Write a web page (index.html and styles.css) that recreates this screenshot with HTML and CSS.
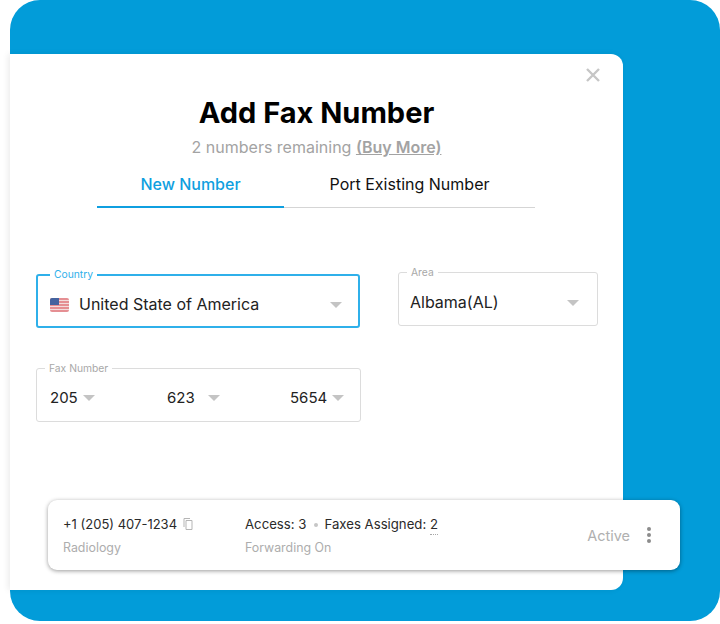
FILE: index.html
```html
<!DOCTYPE html>
<html lang="en">
<head>
    <meta charset="UTF-8">
    <meta name="viewport" content="width=device-width, initial-scale=1.0">
    <title>Add Fax Number</title>
    <link rel="stylesheet" href="styles.css">
</head>
<body>
    <div class="panel">
        <div class="modal">
            <svg class="close" width="16" height="16" viewBox="0 0 16 16"><path d="M2 2l12 12M14 2L2 14"/></svg>
            <h1>Add Fax Number</h1>
            <p class="remaining">2 numbers remaining <a href="#">(Buy More)</a></p>
            <div class="tabs">
                <div class="tab active">New Number</div>
                <div class="tab">Port Existing Number</div>
            </div>
            <div class="row">
                <div class="field field-country focused">
                    <span class="field-label">Country</span>
                    <svg class="flag" width="19" height="14" viewBox="0 0 19 14">
                        <rect width="19" height="14" rx="2" fill="#e58f93"/>
                        <path d="M0 2.5h19M0 5.5h19M0 8.5h19M0 11.5h19" stroke="#f3dcdc" stroke-width="1.1"/>
                        <path d="M0 2a2 2 0 0 1 2-2h7v7H0z" fill="#44639f"/>
                    </svg>
                    <span class="value">United State of America</span>
                    <span class="caret caret-end"></span>
                </div>
                <div class="field field-area">
                    <span class="field-label">Area</span>
                    <span class="value">Albama(AL)</span>
                    <span class="caret caret-end"></span>
                </div>
            </div>
            <div class="field field-fax">
                <span class="field-label">Fax Number</span>
                <div class="part part-a"><span class="value">205</span><span class="caret"></span></div>
                <div class="part part-b"><span class="value">623</span><span class="caret"></span></div>
                <div class="part part-c"><span class="value">5654</span><span class="caret"></span></div>
            </div>
        </div>
        <div class="number-card">
            <div class="col-number">
                <div class="line line-number">+1 (205) 407-1234<svg class="copy" width="10" height="12" viewBox="0 0 10 12"><path d="M3 2.5h6v9H3zM1 9V.5h6"/></svg></div>
                <div class="sub">Radiology</div>
            </div>
            <div class="col-access">
                <div class="line">Access: 3<span class="dot"></span>Faxes Assigned: <span class="dotted">2</span></div>
                <div class="sub">Forwarding On</div>
            </div>
            <div class="status">Active</div>
            <div class="more"><span></span><span></span><span></span></div>
        </div>
    </div>
</body>
</html>
```

FILE: styles.css
```css
body {
    margin: 0;
    background-color: #fff;
    font-family: Inter, "Open Sans", sans-serif;
}
.panel {
    position: relative;
    box-sizing: border-box;
    width: 710px;
    height: 621px;
    margin-left: 10px;
    padding-top: 54px;
    background-color: #029cd9;
    border-radius: 30px;
}
.modal {
    position: relative;
    box-sizing: border-box;
    width: 613px;
    height: 536px;
    padding-top: 41px;
    background-color: #fff;
    border-radius: 0 12px 12px 0;
    box-shadow: -2px 0 6px rgba(0, 0, 0, 0.08);
}
.close {
    position: absolute;
    top: 13px;
    right: 22px;
}
.close path {
    fill: none;
    stroke: #c6c6c6;
    stroke-width: 2.4;
}
h1 {
    margin: 0;
    text-align: center;
    font-size: 29px;
    line-height: 36px;
    font-weight: 700;
    color: #000;
}
.remaining {
    margin: 6px 0 0;
    text-align: center;
    font-size: 16px;
    line-height: 20px;
    color: #a3a3a3;
}
.remaining a {
    color: #a3a3a3;
    font-weight: 600;
}
.tabs {
    display: flex;
    width: 438px;
    margin: 14px 0 0 87px;
    border-bottom: 1px solid #d5d5d5;
}
.tab {
    width: 251px;
    height: 35px;
    line-height: 26px;
    font-size: 16px;
    font-weight: 400;
    color: #111;
    text-align: center;
}
.tab.active {
    width: 187px;
    margin-bottom: -1px;
    font-weight: 500;
    color: #0f9fe0;
    border-bottom: 2px solid #0f9fe0;
}
.row {
    display: flex;
    align-items: flex-start;
    margin: 64px 0 0 26px;
    gap: 38px;
}
.field {
    position: relative;
    box-sizing: border-box;
    display: flex;
    align-items: center;
    height: 54px;
    padding-top: 5px;
    border: 1px solid #dcdcdc;
    border-radius: 3px;
}
.field.focused {
    border: 2px solid #2fb0ea;
}
.field-country {
    width: 324px;
    margin-top: 2px;
    padding-left: 12px;
}
.field-area {
    width: 200px;
    padding-left: 11px;
}
.field-fax {
    width: 325px;
    margin: 40px 0 0 26px;
}
.field-label {
    position: absolute;
    top: -7px;
    left: 8px;
    padding: 0 4px;
    background-color: #fff;
    font-size: 10.3px;
    line-height: 12px;
    color: #a8a8a8;
}
.focused .field-label {
    top: -8px;
    left: 12px;
    color: #2fb0ea;
}
.flag {
    margin: 2px 10px 0 0;
}
.value {
    font-size: 16px;
    color: #222;
}
.part .value {
    font-size: 15px;
}
.caret {
    display: inline-block;
    width: 0;
    height: 0;
    border-left: 6px solid transparent;
    border-right: 6px solid transparent;
    border-top: 6px solid #c4c4c4;
    margin-left: 5px;
}
.caret-end {
    margin-left: auto;
    margin-top: 3px;
}
.field-country .caret-end {
    margin-right: 16px;
}
.field-area .caret-end {
    margin-right: 18px;
}
.part {
    display: flex;
    align-items: center;
}
.part-a {
    margin-left: 13px;
    width: 117px;
}
.part-b {
    width: 123px;
}
.part-b .caret {
    margin-left: 13px;
}
.number-card {
    position: absolute;
    left: 38px;
    top: 500px;
    box-sizing: border-box;
    display: flex;
    align-items: center;
    width: 632px;
    height: 70px;
    padding: 0 29px 0 15px;
    background-color: #fff;
    border-radius: 9px;
    box-shadow: 0 1px 4px rgba(0, 0, 0, 0.4);
}
.line {
    font-size: 13.2px;
    line-height: 18px;
    font-weight: 400;
    color: #2a2a2a;
}
.line-number {
    font-size: 13px;
}
.sub {
    margin-top: 7px;
    font-size: 12.4px;
    line-height: 16px;
    color: #adadad;
}
.col-number {
    width: 182px;
}
.copy {
    margin-left: 6px;
    vertical-align: -1px;
}
.copy path {
    fill: none;
    stroke: #b5b5b5;
    stroke-width: 1;
}
.dot {
    display: inline-block;
    width: 4px;
    height: 4px;
    margin: 0 6px 2px 8px;
    border-radius: 50%;
    background-color: #c6c6c6;
}
.dotted {
    padding-bottom: 2px;
    border-bottom: 1px dotted #a8a8a8;
}
.status {
    margin-left: auto;
    font-size: 14.5px;
    color: #b0b0b0;
}
.more {
    display: flex;
    flex-direction: column;
    gap: 2px;
    margin-left: 17px;
}
.more span {
    width: 4px;
    height: 4px;
    border-radius: 50%;
    background-color: #8c8c8c;
}
```
